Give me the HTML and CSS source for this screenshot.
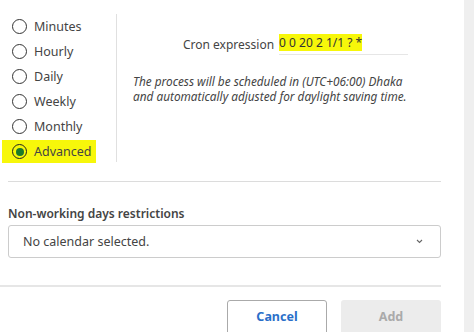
FILE: index.html
```html
<!DOCTYPE html>
<html lang="en">
<head>
    <meta charset="UTF-8">
    <title>Schedule</title>
    <link rel="stylesheet" href="styles.css">
</head>
<body>
    <div class="layout">
        <div class="panel">
            <!-- recurrence options -->
            <div class="schedule">
                <div class="radio-list">
                    <label class="radio-row"><span class="radio"></span>Minutes</label>
                    <label class="radio-row"><span class="radio"></span>Hourly</label>
                    <label class="radio-row"><span class="radio"></span>Daily</label>
                    <label class="radio-row"><span class="radio"></span>Weekly</label>
                    <label class="radio-row"><span class="radio"></span>Monthly</label>
                    <label class="radio-row selected"><span class="radio checked"></span>Advanced</label>
                </div>
                <div class="cron-area">
                    <div class="cron-row">
                        <span class="cron-label">Cron expression</span>
                        <span class="cron-input"><span class="mark">0 0 20 2 1/1 ? *</span></span>
                    </div>
                    <p class="note">The process will be scheduled in (UTC+06:00) Dhaka</p>
                    <p class="note">and automatically adjusted for daylight saving time.</p>
                </div>
            </div>

            <div class="restrictions">
                <div class="field-label">Non-working days restrictions</div>
                <div class="select">
                    <span>No calendar selected.</span>
                    <svg class="chevron" width="7" height="5" viewBox="0 0 7 5"><path d="M1 1l2.5 2.5 2.5-2.5" fill="none" stroke="#666" stroke-width="1.1"/></svg>
                </div>
            </div>

            <div class="footer">
                <button class="btn btn-cancel">Cancel</button>
                <button class="btn btn-add">Add</button>
            </div>
        </div>
        <div class="side"></div>
    </div>
</body>
</html>
```

FILE: styles.css
```css
body {
    margin: 0;
    background: #fff;
    font-family: "Noto Sans", "Open Sans", sans-serif;
    color: #333;
    font-size: 12px;
}

.layout {
    display: flex;
    height: 332px;
    overflow: hidden;
}

.panel {
    width: 441px;
}

.side {
    margin-left: 23px;
    width: 10px;
    background: #efefef;
}

.schedule {
    display: flex;
    margin-left: 8px;
    border-bottom: 1px solid #dcdcdc;
    height: 181px;
}

.radio-list {
    margin: 14px 0 0 -6px;
    width: 114px;
    height: 148px;
    border-right: 1px solid #e0e0e0;
}

.radio-row {
    display: flex;
    align-items: center;
    height: 25px;
    padding-left: 10px;
    font-size: 12.5px;
    color: #444;
}

.radio-row.selected {
    background: #f7f70a;
    width: 84px;
    height: 23px;
    margin-top: 1px;
}

.radio {
    width: 13px;
    height: 13px;
    border: 1.5px solid #333;
    border-radius: 50%;
    margin-right: 7px;
    box-sizing: content-box;
    position: relative;
}

.radio.checked {
    border-color: #222;
}

.radio.checked::after {
    content: "";
    position: absolute;
    left: 2.5px;
    top: 2.5px;
    width: 8px;
    height: 8px;
    border-radius: 50%;
    background: #1a7a2a;
}

.cron-area {
    padding-left: 16px;
}

.cron-row {
    display: flex;
    align-items: center;
    margin: 34px 0 19px 50px;
    font-size: 12px;
}

.cron-label {
    margin-right: 5px;
    color: #444;
}

.cron-input {
    width: 129px;
    border-bottom: 1px solid #e6e6e6;
    padding-bottom: 3px;
}

.mark {
    background: #f7f70a;
    color: #333;
}

.note {
    margin: 0;
    font-style: italic;
    height: 15px;
    line-height: 15px;
    font-size: 11.8px;
    color: #444;
    white-space: nowrap;
}

.restrictions {
    padding: 23px 0 0 8px;
    height: 80px;
    border-bottom: 2px solid #e6e6e6;
}

.field-label {
    font-weight: 600;
    font-size: 12px;
    color: #444;
    margin-bottom: 3px;
}

.select {
    display: flex;
    align-items: center;
    justify-content: space-between;
    height: 31px;
    border: 1px solid #ccc;
    border-radius: 3px;
    padding: 0 17px 0 14px;
    color: #444;
    font-size: 12.5px;
}

.footer {
    display: flex;
    justify-content: flex-end;
    gap: 14px;
    padding-top: 13px;
}

.btn {
    width: 100px;
    height: 38px;
    font-family: inherit;
    font-size: 12.5px;
    font-weight: 700;
    border-radius: 3px;
    padding-bottom: 6px;
}

.btn-cancel {
    background: #fff;
    border: 1px solid #aaa;
    color: #2a6fc9;
}

.btn-add {
    background: #ececec;
    border: none;
    color: #aaa;
}
```
